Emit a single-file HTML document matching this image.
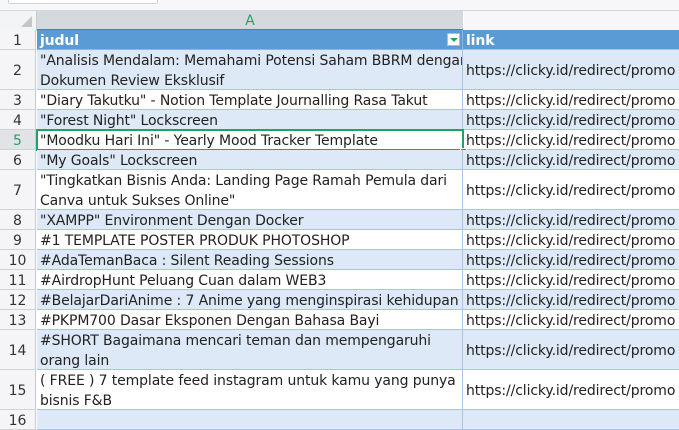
<!DOCTYPE html>
<html><head><style>
body{margin:0;width:679px;height:413px;overflow:hidden;background:#fff;font-family:"DejaVu Sans","Liberation Sans",sans-serif;font-size:14px;letter-spacing:-0.12px;color:#222;position:relative}
.top{position:absolute;left:0;top:0;width:679px;height:10px;background:#f7f7f9;border-bottom:1px solid #d4d6da}
.topbox{position:absolute;left:8px;top:-4px;width:148px;height:6px;border:1px solid #cfd2d6;background:#fff;border-radius:2px}
.colhdr{position:absolute;top:11px;height:19px;background:#f3f4f6;border-bottom:1px solid #c8cbd0}
.r{position:absolute;left:0;width:679px}
.rn{position:absolute;left:0;width:36px;text-align:center;background:#f5f5f7;border-right:1px solid #c8cbd0;border-bottom:1px solid #cfd3d8;color:#333;box-sizing:border-box;display:flex;align-items:center;justify-content:center;letter-spacing:0;padding-top:2px}
.a{position:absolute;left:37px;width:426px;box-sizing:border-box;padding-left:3px;padding-top:1px;line-height:20px;border-bottom:1px solid #a9c4e6;border-right:1px solid #a9c4e6;overflow:hidden;white-space:nowrap}
.b{position:absolute;left:463px;width:216px;box-sizing:border-box;padding-left:3px;padding-top:2px;border-bottom:1px solid #a9c4e6;display:flex;align-items:center;white-space:nowrap;overflow:hidden}
.band .a,.band .b{background:#dde9f6}
</style></head><body>
<div class="top"><div class="topbox"></div></div>
<div class="colhdr" style="left:0;width:36px;border-right:1px solid #c8cbd0"><div style="position:absolute;right:4px;bottom:3px;width:0;height:0;border-left:11px solid transparent;border-bottom:11px solid #c3c6ca"></div></div>
<div class="colhdr" style="left:37px;width:426px;background:#d5d8dc;border-bottom:2px solid #21a366;height:18px;text-align:center;color:#21a366;line-height:20px">A</div>
<div class="colhdr" style="left:464px;width:215px;background:#f7f7f9"></div>

<div class="r" style="top:30px;height:20px">
<div class="rn" style="height:20px">1</div>
<div class="a" style="height:20px;background:#5b9bd5;color:#fff;font-weight:bold;border-color:#8fb6e2">judul<div style="position:absolute;right:2px;top:3px;width:13px;height:13px;background:#fff;border:1px solid #bbb;box-sizing:border-box"><div style="margin:4px auto 0;width:0;height:0;border-left:4px solid transparent;border-right:4px solid transparent;border-top:4px solid #21a366"></div></div></div>
<div class="b" style="height:20px;background:#5b9bd5;color:#fff;font-weight:bold">link</div></div>

<div class="r band" style="top:50px;height:40px"><div class="rn" style="height:40px">2</div><div class="a" style="height:40px">"Analisis Mendalam: Memahami Potensi Saham BBRM dengan<br>Dokumen Review Eksklusif</div><div class="b" style="height:40px">https://clicky.id/redirect/promo</div></div>
<div class="r" style="top:90px;height:20px"><div class="rn" style="height:20px">3</div><div class="a" style="height:20px">"Diary Takutku" - Notion Template Journalling Rasa Takut</div><div class="b" style="height:20px">https://clicky.id/redirect/promo</div></div>
<div class="r band" style="top:110px;height:20px"><div class="rn" style="height:20px">4</div><div class="a" style="height:20px">"Forest Night" Lockscreen</div><div class="b" style="height:20px">https://clicky.id/redirect/promo</div></div>
<div class="r" style="top:130px;height:20px"><div class="rn" style="height:20px;background:#e1e3e6;color:#21a366">5</div><div class="a" style="height:20px;background:#fff">"Moodku Hari Ini" - Yearly Mood Tracker Template</div><div class="b" style="height:20px">https://clicky.id/redirect/promo</div></div>
<div style="position:absolute;left:36px;top:129px;width:428px;height:22px;border:2px solid #21a366;box-sizing:border-box"></div>
<div style="position:absolute;left:460px;top:148px;width:5px;height:5px;background:#21a366;border:1px solid #fff"></div>
<div class="r band" style="top:150px;height:20px"><div class="rn" style="height:20px">6</div><div class="a" style="height:20px">"My Goals" Lockscreen</div><div class="b" style="height:20px">https://clicky.id/redirect/promo</div></div>
<div class="r" style="top:170px;height:40px"><div class="rn" style="height:40px">7</div><div class="a" style="height:40px">"Tingkatkan Bisnis Anda: Landing Page Ramah Pemula dari<br>Canva untuk Sukses Online"</div><div class="b" style="height:40px">https://clicky.id/redirect/promo</div></div>
<div class="r band" style="top:210px;height:20px"><div class="rn" style="height:20px">8</div><div class="a" style="height:20px">"XAMPP" Environment Dengan Docker</div><div class="b" style="height:20px">https://clicky.id/redirect/promo</div></div>
<div class="r" style="top:230px;height:20px"><div class="rn" style="height:20px">9</div><div class="a" style="height:20px">#1 TEMPLATE POSTER PRODUK PHOTOSHOP</div><div class="b" style="height:20px">https://clicky.id/redirect/promo</div></div>
<div class="r band" style="top:250px;height:20px"><div class="rn" style="height:20px">10</div><div class="a" style="height:20px">#AdaTemanBaca : Silent Reading Sessions</div><div class="b" style="height:20px">https://clicky.id/redirect/promo</div></div>
<div class="r" style="top:270px;height:20px"><div class="rn" style="height:20px">11</div><div class="a" style="height:20px">#AirdropHunt Peluang Cuan dalam WEB3</div><div class="b" style="height:20px">https://clicky.id/redirect/promo</div></div>
<div class="r band" style="top:290px;height:20px"><div class="rn" style="height:20px">12</div><div class="a" style="height:20px">#BelajarDariAnime : 7 Anime yang menginspirasi kehidupan</div><div class="b" style="height:20px">https://clicky.id/redirect/promo</div></div>
<div class="r" style="top:310px;height:20px"><div class="rn" style="height:20px">13</div><div class="a" style="height:20px">#PKPM700 Dasar Eksponen Dengan Bahasa Bayi</div><div class="b" style="height:20px">https://clicky.id/redirect/promo</div></div>
<div class="r band" style="top:330px;height:40px"><div class="rn" style="height:40px">14</div><div class="a" style="height:40px">#SHORT Bagaimana mencari teman dan mempengaruhi<br>orang lain</div><div class="b" style="height:40px">https://clicky.id/redirect/promo</div></div>
<div class="r" style="top:370px;height:40px"><div class="rn" style="height:40px">15</div><div class="a" style="height:40px">( FREE ) 7 template feed instagram untuk kamu yang punya<br>bisnis F&amp;B</div><div class="b" style="height:40px">https://clicky.id/redirect/promo</div></div>
<div class="r band" style="top:410px;height:20px"><div class="rn" style="height:20px">16</div><div class="a" style="height:20px"></div><div class="b" style="height:20px"></div></div>
</body></html>
